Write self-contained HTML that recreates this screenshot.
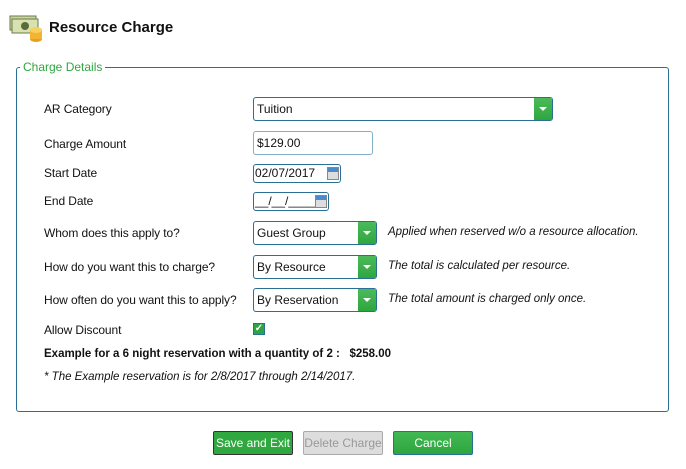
<!DOCTYPE html>
<html><head><style>
body{margin:0;width:686px;height:469px;background:#fff;font-family:"Liberation Sans",sans-serif;font-size:12px;color:#111;position:relative;overflow:hidden}
.a{position:absolute;white-space:nowrap}
.lbl{position:absolute;left:44px;font-size:12px;letter-spacing:-0.1px}
.box{position:absolute;border:1px solid #2a6f96;border-radius:3px;background:#fff;box-sizing:border-box;padding-left:3px;font-size:12px}
.dd .arr{position:absolute;right:0;top:0;bottom:0;width:18px;background:linear-gradient(#4cba5a,#2ea63f)}
.dd .arr:after{content:"";position:absolute;left:5px;top:9px;border-left:4px solid transparent;border-right:4px solid transparent;border-top:4px solid #fff}
.it{position:absolute;left:388px;font-style:italic;font-size:11.5px}
.cal{position:absolute;right:1px;top:2px;width:12px;height:13px;background:linear-gradient(#4a8ad0 0 4px,#ddd 4px);border:1px solid #888;box-sizing:border-box}
.btn{position:absolute;top:431px;height:24px;box-sizing:border-box;border-radius:2px;text-align:center;line-height:22px;font-size:12px}
</style></head><body>
<svg class="a" style="left:9px;top:14px" width="34" height="28">
<rect x="1" y="2" width="26" height="14" fill="#c9d5a0" stroke="#6b7a4a"/>
<rect x="3" y="5" width="26" height="14" fill="#d8e2b0" stroke="#6b7a4a"/>
<circle cx="16" cy="12" r="4" fill="#5b6b3a"/>
<ellipse cx="27" cy="25" rx="6" ry="3" fill="#e6a020"/>
<rect x="21" y="16" width="12" height="9" fill="#f2b431"/>
<ellipse cx="27" cy="16" rx="6" ry="3" fill="#f8d060"/>
</svg>
<div class="a" style="left:49px;top:19px;font-size:15px;font-weight:bold">Resource Charge</div>
<div class="a" style="left:16px;top:67px;width:653px;height:345px;border:1px solid #2a6f96;border-radius:3px;box-sizing:border-box"></div>
<div class="a" style="left:20px;top:60px;background:#fff;color:#2fa63f;padding:0 3px;font-size:12px">Charge Details</div>
<div class="lbl" style="top:102px">AR Category</div>
<div class="lbl" style="top:137px">Charge Amount</div>
<div class="lbl" style="top:166px">Start Date</div>
<div class="lbl" style="top:194px">End Date</div>
<div class="lbl" style="top:226px">Whom does this apply to?</div>
<div class="lbl" style="top:260px">How do you want this to charge?</div>
<div class="lbl" style="top:293px">How often do you want this to apply?</div>
<div class="lbl" style="top:323px">Allow Discount</div>
<div class="box dd" style="left:253px;top:97px;width:300px;height:24px;line-height:22px">Tuition<div class="arr"></div></div>
<div class="box" style="left:253px;top:131px;width:120px;height:24px;line-height:22px;border-color:#7fb0c8">$129.00</div>
<div class="box" style="left:253px;top:164px;width:88px;height:19px;line-height:17px;padding-left:1px">02/07/2017<div class="cal"></div></div>
<div class="box" style="left:253px;top:192px;width:76px;height:19px;line-height:17px;padding-left:1px">__/__/____<div class="cal"></div></div>
<div class="box dd" style="left:253px;top:221px;width:124px;height:24px;line-height:22px">Guest Group<div class="arr"></div></div>
<div class="box dd" style="left:253px;top:255px;width:124px;height:24px;line-height:22px">By Resource<div class="arr"></div></div>
<div class="box dd" style="left:253px;top:288px;width:124px;height:24px;line-height:22px">By Reservation<div class="arr"></div></div>
<div class="it" style="top:226px">Applied when reserved w/o a resource allocation.</div>
<div class="it" style="top:260px">The total is calculated per resource.</div>
<div class="it" style="top:293px">The total amount is charged only once.</div>
<div class="a" style="left:253px;top:323px;width:12px;height:12px;background:#2ea63f;border:1px solid #2a6f96;box-sizing:border-box;color:#fff;font-size:10px;line-height:10px;text-align:center;font-weight:bold">✓</div>
<div class="a" style="left:44px;top:348px;font-weight:bold;font-size:11.5px">Example for a 6 night reservation with a quantity of 2 :&nbsp;&nbsp; $258.00</div>
<div class="a" style="left:44px;top:371px;font-style:italic;font-size:11.5px">* The Example reservation is for 2/8/2017 through 2/14/2017.</div>
<div class="btn" style="left:213px;width:80px;background:#2fa83f;border:1px solid #333;color:#fff">Save and Exit</div>
<div class="btn" style="left:303px;width:80px;background:#ddd;border:1px solid #aaa;color:#999">Delete Charge</div>
<div class="btn" style="left:393px;width:80px;background:linear-gradient(#42b852,#2ea63f);border:1px solid #2a6f96;color:#fff">Cancel</div>
</body></html>
